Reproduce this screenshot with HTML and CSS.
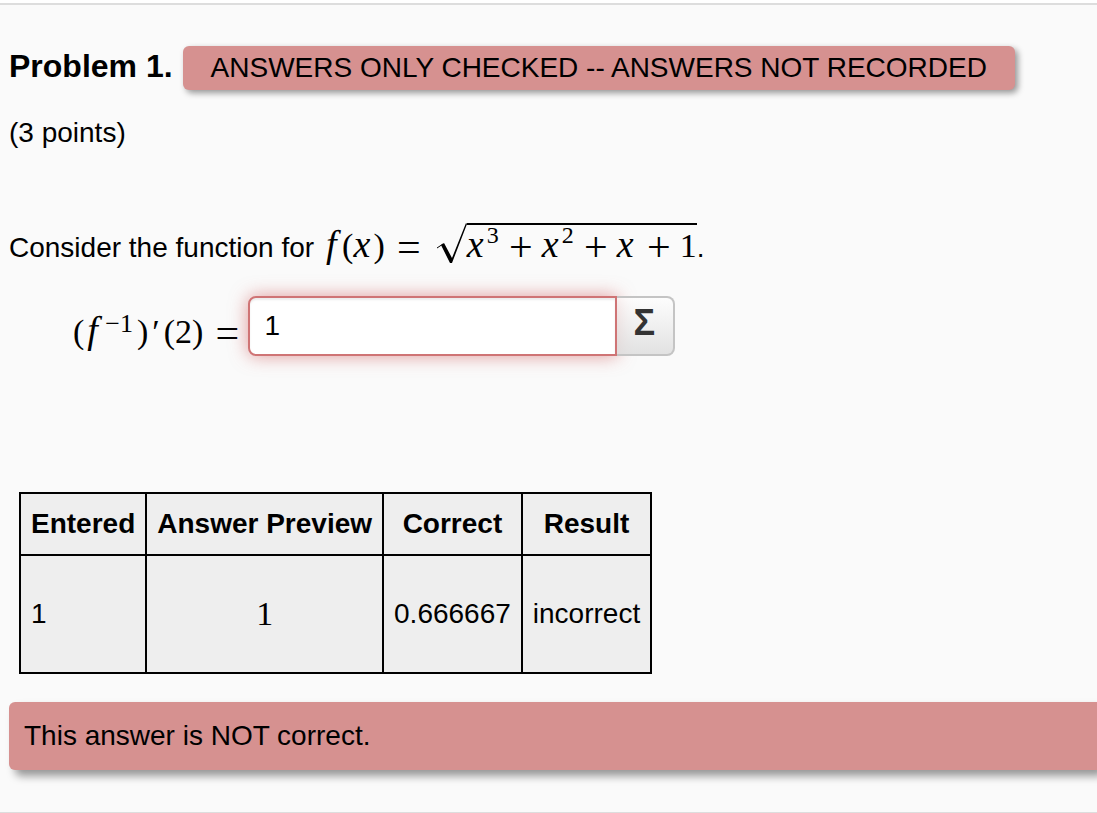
FILE: index.html
```
<!DOCTYPE html>
<html lang="en">
<head>
    <meta charset="UTF-8">
    <meta name="viewport" content="width=device-width, initial-scale=1.0">
    <title>Problem 1</title>
    <link rel="stylesheet" href="styles.css">
</head>
<body>
    <main class="problem">
        <div class="problem-header">
            <h1>Problem 1.</h1>
            <div class="notice">ANSWERS ONLY CHECKED -- ANSWERS NOT RECORDED</div>
        </div>
        <p class="points">(3 points)</p>
        <form id="answerForm">
            <div class="statement">
                <span>Consider the function for</span>
                <span class="math"><i class="fn">f</i>(<i>x</i>)<span class="rel">=</span><span class="root">
                    <svg class="radical" viewBox="0 0 31 41" aria-hidden="true">
                        <path d="M1 25 L7 21" fill="none" stroke="#000" stroke-width="1"/>
                        <path d="M5 22 L8 20 L16 35 L30 0 L31 1 L16 40 L14 40 Z"/>
                    </svg>
                    <span class="radicand"><i>x</i><sup>3</sup><span class="op">+</span><i>x</i><sup>2</sup><span class="op">+</span><i>x</i><span class="op">+</span>1</span>
                </span></span>
                <span>.</span>
            </div>
            <div class="answer">
                <label class="math" for="answer1">(<i class="fn">f</i><sup>−1</sup>)<span class="prime">′</span>(2)<span class="rel">=</span></label>
                <div class="answer-group">
                    <input type="text" id="answer1" value="1">
                    <button type="button" aria-label="Equation editor">Σ</button>
                </div>
            </div>
        </form>
        <table class="results">
            <thead>
                <tr>
                    <th>Entered</th>
                    <th>Answer Preview</th>
                    <th>Correct</th>
                    <th>Result</th>
                </tr>
            </thead>
            <tbody>
                <tr>
                    <td>1</td>
                    <td class="preview">1</td>
                    <td>0.666667</td>
                    <td>incorrect</td>
                </tr>
            </tbody>
        </table>
        <div class="feedback">This answer is NOT correct.</div>
    </main>
</body>
</html>
```
FILE: styles.css
```
* {
    box-sizing: border-box;
}
body {
    margin: 0;
    padding-top: 3px;
    background-color: #fff;
    color: #000;
    font-family: Arial, "Liberation Sans", sans-serif;
    font-size: 28px;
    line-height: 40px;
}
.problem {
    padding: 41px 0 42px 9px;
    background-color: #fafafa;
    border-top: 2px solid #ddd;
    border-bottom: 1px solid #ddd;
    overflow: hidden;
}
.problem-header {
    display: flex;
    align-items: flex-start;
    gap: 10px;
}
h1 {
    margin: 0;
    font-size: 32px;
    white-space: nowrap;
}
.notice {
    padding: 2px 28px;
    background-color: #d69190;
    border-radius: 6px;
    box-shadow: 3px 3px 6px rgba(0,0,0,0.4);
    white-space: nowrap;
}
.points {
    margin: 23px 0 70px;
}
.statement {
    display: flex;
    align-items: baseline;
    height: 73px;
    white-space: nowrap;
}
.math {
    font-family: "Liberation Serif", serif;
    font-size: 34px;
    line-height: 38px;
    white-space: nowrap;
}
.statement .math {
    margin-left: 9px;
}
.math i {
    display: inline-block;
    width: 20px;
    font-size: 38px;
}
.math .fn {
    width: 19px;
    padding-left: 3px;
}
.math sup {
    font-size: 24px;
    line-height: 20px;
    vertical-align: 14px;
}
.answer .math sup {
    margin: 0 4px 0 2px;
    font-size: 26px;
    vertical-align: 11px;
}
.prime {
    margin: 0 4px;
}
.rel,
.op {
    display: inline-block;
    width: 24px;
    font-size: 42px;
    line-height: 20px;
    text-align: center;
    vertical-align: -4px;
}
.rel {
    margin-left: 12px;
}
.op {
    margin: 0 9px 0 10px;
}
.root {
    display: inline-flex;
    align-items: baseline;
    margin-left: 15px;
}
.radical {
    align-self: flex-start;
    width: 31px;
    height: 41px;
}
.radicand {
    border-top: 2px solid #000;
}
.answer {
    display: flex;
    align-items: center;
    padding-left: 64px;
}
.answer .math {
    padding-top: 9px;
    margin-right: 9px;
}
.answer-group {
    display: flex;
    height: 60px;
}
input[type="text"] {
    width: 369px;
    padding: 0 14px;
    border: 2px solid #cf7475;
    border-radius: 8px 0 0 8px;
    box-shadow: inset 0 2px 2px rgba(0,0,0,0.08), 0 0 18px rgba(207,90,90,0.6);
    background-color: #fff;
    font: inherit;
}
button {
    width: 58px;
    padding: 0 2px 6px 0;
    border: 2px solid #c4c4c4;
    border-left: none;
    border-radius: 0 8px 8px 0;
    background: linear-gradient(rgba(255,255,255,0.6), rgba(220,220,220,0.8));
    color: #333;
    font: bold 36px "Liberation Sans", Arial, sans-serif;
    cursor: pointer;
}
.results {
    margin: 136px 0 28px 10px;
    border-collapse: collapse;
    background-color: #eee;
}
.results th,
.results td {
    height: 62px;
    padding: 0 10px;
    border: 2px solid #000;
}
.results td {
    height: 118px;
}
.results .preview {
    font-family: "Liberation Serif", serif;
    font-size: 34px;
    text-align: center;
}
.feedback {
    padding: 14px 15px;
    background-color: #d69190;
    border-radius: 6px 0 0 6px;
    box-shadow: 6px 6px 8px rgba(0,0,0,0.4);
}
```
